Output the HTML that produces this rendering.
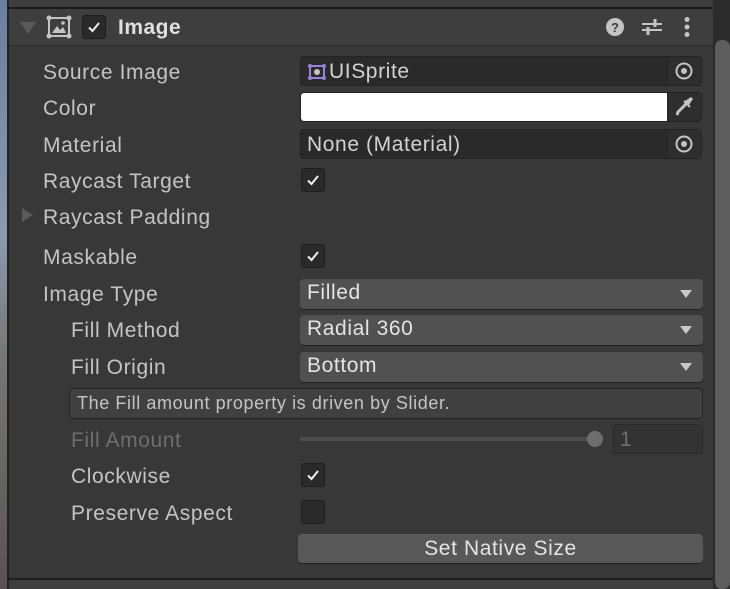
<html><head><style>
body{margin:0;width:730px;height:589px;background:#383838;position:relative;overflow:hidden;font-family:"Liberation Sans",sans-serif;color:#c4c4c4}
.a{position:absolute}
.lbl{position:absolute;font-size:21px;letter-spacing:0.6px;line-height:24px;color:#c4c4c4;top:1px}
.fld{position:absolute;left:300px;width:402px;height:30px;background:#2a2a2a;border:1px solid #232323;border-radius:4px;box-sizing:border-box;font-size:21px;letter-spacing:0.6px;line-height:30px;color:#d2d2d2}
.dd{position:absolute;left:300px;width:403px;height:30px;background:#515151;border-radius:4px;box-shadow:0 1px 0 #222;font-size:21px;letter-spacing:0.6px;line-height:28px;color:#e4e4e4;padding-left:7px;box-sizing:border-box}
.dd:after{content:"";position:absolute;right:11px;top:11px;border-left:6px solid transparent;border-right:6px solid transparent;border-top:8px solid #c8c8c8}
.cb{position:absolute;left:301px;width:24px;height:24px;background:#2a2a2a;border:1px solid #1e1e1e;border-radius:3px;box-sizing:border-box}
.cb svg{position:absolute;left:3px;top:3px}
.pick{position:absolute;right:0;top:0;width:33px;height:28px;background:#2e2e2e;border-left:1px solid #252525}
</style></head><body>
<div class="a" style="left:0;top:0;width:7px;height:589px;background:linear-gradient(#6a7f9f,#8a9ab0 40%,#777 60%,#5a5250)"></div>
<div class="a" style="left:7px;top:0;width:2px;height:589px;background:#232323"></div>
<div class="a" style="left:9px;top:0;width:704px;height:7px;background:#3e3e3e"></div>
<div class="a" style="left:9px;top:7px;width:704px;height:2px;background:#1a1a1a"></div>
<div class="a" style="left:9px;top:9px;width:704px;height:36px;background:#3e3e3e;border-bottom:1px solid #2f2f2f"></div>
<div class="a" style="left:713px;top:0;width:17px;height:589px;background:#2b2b2b"></div>
<div class="a" style="left:715px;top:40px;width:15px;height:549px;background:#5e5e5e;border-radius:7px"></div>
<div class="a" style="left:9px;top:578px;width:704px;height:2px;background:#1f1f1f"></div>
<div class="a" style="left:9px;top:580px;width:704px;height:9px;background:#3e3e3e"></div>
<!-- header -->
<div class="a" style="left:20px;top:22px;border-left:8px solid transparent;border-right:8px solid transparent;border-top:12px solid #5a5a5a"></div>
<svg class="a" style="left:46px;top:15px" width="26" height="24" viewBox="0 0 26 24"><rect x="3" y="3" width="20" height="18" fill="none" stroke="#c4c4c4" stroke-width="2"/><circle cx="3" cy="3" r="2.5" fill="#c4c4c4"/><circle cx="23" cy="3" r="2.5" fill="#c4c4c4"/><circle cx="3" cy="21" r="2.5" fill="#c4c4c4"/><circle cx="23" cy="21" r="2.5" fill="#c4c4c4"/><path d="M6 18 L11 11 L14 15 L17 12 L20 18Z" fill="#c4c4c4"/><circle cx="17" cy="8" r="1.8" fill="#c4c4c4"/></svg>
<div class="cb" style="left:82px;top:15px"><svg width="16" height="16"><path d="M3 8.5 L6.5 12 L13 4" fill="none" stroke="#eee" stroke-width="2"/></svg></div>
<div class="lbl" style="left:118px;top:16px;font-weight:bold;font-size:21px;letter-spacing:0.5px;color:#e0e0e0">Image</div>
<svg class="a" style="left:606px;top:18px" width="18" height="18"><circle cx="9" cy="9" r="9" fill="#c4c4c4"/><text x="9" y="14" text-anchor="middle" font-family="Liberation Sans" font-weight="bold" font-size="13" fill="#3e3e3e">?</text></svg>
<svg class="a" style="left:641px;top:17px" width="22" height="20"><path d="M1 7H21M1 13H21" stroke="#c4c4c4" stroke-width="2"/><path d="M14 2V10M7 10V18" stroke="#c4c4c4" stroke-width="3"/></svg>
<svg class="a" style="left:683px;top:16px" width="8" height="22"><circle cx="4" cy="3.5" r="2.5" fill="#c4c4c4"/><circle cx="4" cy="11" r="2.5" fill="#c4c4c4"/><circle cx="4" cy="18.5" r="2.5" fill="#c4c4c4"/></svg>
<!-- rows -->
<div class="lbl" style="left:43px;top:61px">Source Image</div>
<div class="fld" style="top:56px;padding-left:28px">UISprite<div class="pick"><svg width="33" height="28"><circle cx="16" cy="14" r="7.5" fill="none" stroke="#c4c4c4" stroke-width="2"/><circle cx="16" cy="14" r="3" fill="#c4c4c4"/></svg></div></div>
<svg class="a" style="left:307px;top:63px" width="20" height="18"><rect x="3" y="3" width="14" height="12" fill="none" stroke="#9a80e0" stroke-width="2"/><circle cx="3" cy="3" r="2" fill="#9a80e0"/><circle cx="17" cy="3" r="2" fill="#9a80e0"/><circle cx="3" cy="15" r="2" fill="#9a80e0"/><circle cx="17" cy="15" r="2" fill="#9a80e0"/><circle cx="10" cy="9" r="3" fill="#c4c4c4"/></svg>
<div class="lbl" style="left:43px;top:97px">Color</div>
<div class="fld" style="top:92px;background:#fff;border-color:#232323"><div class="pick" style="background:#2e2e2e"><svg width="33" height="28"><path d="M9 22 L10 19 L19 10" stroke="#c4c4c4" stroke-width="3" fill="none"/><path d="M17 8 L23 4 L25 6 L21 12Z" fill="#c4c4c4"/><path d="M16 8 L22 14" stroke="#c4c4c4" stroke-width="2"/></svg></div></div>
<div class="lbl" style="left:43px;top:134px">Material</div>
<div class="fld" style="top:129px;padding-left:6px">None (Material)<div class="pick"><svg width="33" height="28"><circle cx="16" cy="14" r="7.5" fill="none" stroke="#c4c4c4" stroke-width="2"/><circle cx="16" cy="14" r="3" fill="#c4c4c4"/></svg></div></div>
<div class="lbl" style="left:43px;top:170px">Raycast Target</div>
<div class="cb" style="top:168px"><svg width="16" height="16"><path d="M3 8.5 L6.5 12 L13 4" fill="none" stroke="#eee" stroke-width="2"/></svg></div>
<div class="a" style="left:22px;top:208px;border-top:7px solid transparent;border-bottom:7px solid transparent;border-left:11px solid #5a5a5a"></div>
<div class="lbl" style="left:43px;top:206px">Raycast Padding</div>
<div class="lbl" style="left:43px;top:246px">Maskable</div>
<div class="cb" style="top:244px"><svg width="16" height="16"><path d="M3 8.5 L6.5 12 L13 4" fill="none" stroke="#eee" stroke-width="2"/></svg></div>
<div class="lbl" style="left:43px;top:283px">Image Type</div>
<div class="dd" style="top:279px">Filled</div>
<div class="lbl" style="left:71px;top:319px">Fill Method</div>
<div class="dd" style="top:315px">Radial 360</div>
<div class="lbl" style="left:71px;top:356px">Fill Origin</div>
<div class="dd" style="top:352px">Bottom</div>
<div class="a" style="left:69px;top:388px;width:634px;height:31px;background:#404040;border:1px solid #232323;border-radius:4px;box-sizing:border-box;font-size:18px;letter-spacing:0.6px;line-height:29px;padding-left:7px;color:#c4c4c4">The Fill amount property is driven by Slider.</div>
<div class="lbl" style="left:71px;top:429px;color:#6e6e6e">Fill Amount</div>
<div class="a" style="left:300px;top:437px;width:295px;height:4px;background:#4e4e4e;border-radius:2px"></div>
<div class="a" style="left:587px;top:431px;width:16px;height:16px;background:#6e6e6e;border-radius:50%"></div>
<div class="a" style="left:613px;top:424px;width:90px;height:30px;background:#333;border:1px solid #2a2a2a;border-radius:4px;box-sizing:border-box;font-size:21px;line-height:30px;padding-left:6px;color:#6e6e6e">1</div>
<div class="lbl" style="left:71px;top:465px">Clockwise</div>
<div class="cb" style="top:463px"><svg width="16" height="16"><path d="M3 8.5 L6.5 12 L13 4" fill="none" stroke="#eee" stroke-width="2"/></svg></div>
<div class="lbl" style="left:71px;top:502px">Preserve Aspect</div>
<div class="cb" style="top:500px"></div>
<div class="a" style="left:298px;top:534px;width:405px;height:29px;background:#585858;border-radius:4px;box-shadow:0 1px 0 #222;text-align:center;font-size:21px;letter-spacing:0.6px;line-height:30px;color:#e4e4e4">Set Native Size</div>
</body></html>
